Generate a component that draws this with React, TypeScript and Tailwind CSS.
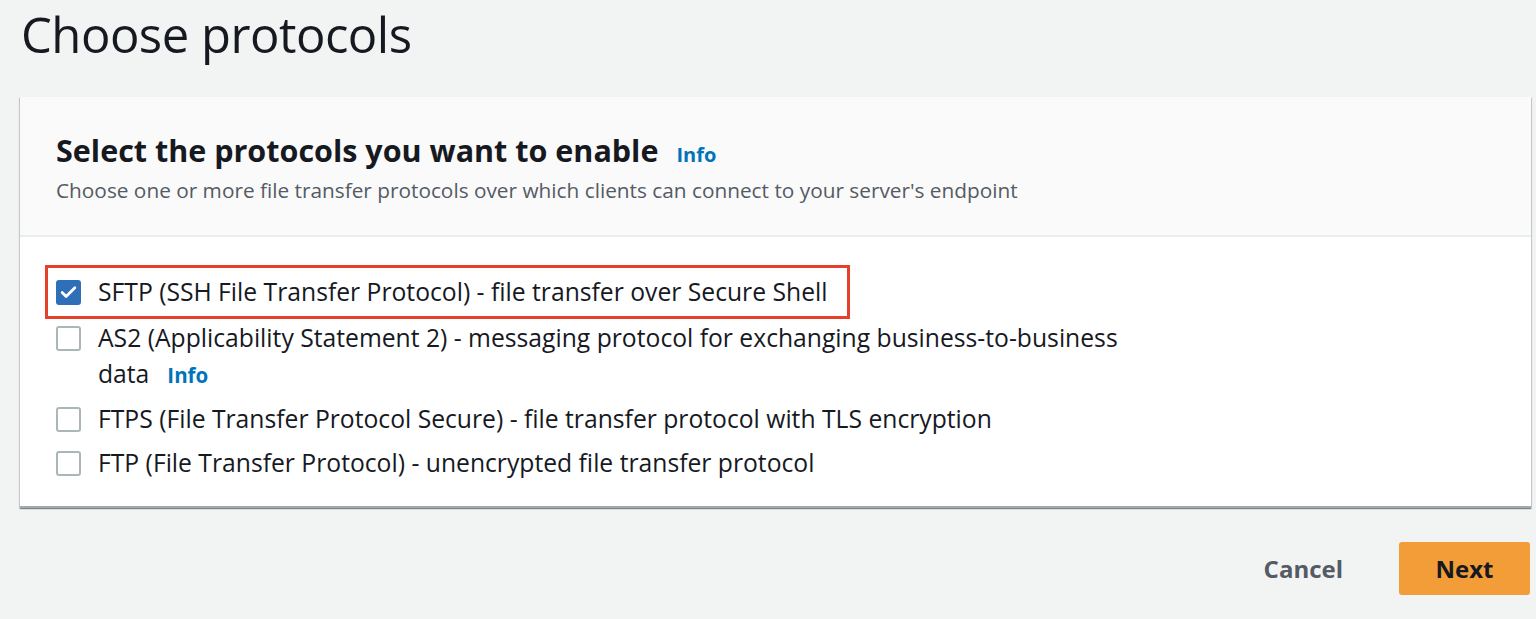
import { Check } from 'lucide-react';

const protocols = [
  { id: 'sftp', label: 'SFTP (SSH File Transfer Protocol) - file transfer over Secure Shell', checked: true },
  { id: 'as2', label: 'AS2 (Applicability Statement 2) - messaging protocol for exchanging business-to-business', tail: 'data', info: true },
  { id: 'ftps', label: 'FTPS (File Transfer Protocol Secure) - file transfer protocol with TLS encryption' },
  { id: 'ftp', label: 'FTP (File Transfer Protocol) - unencrypted file transfer protocol' },
];

function Box({ checked }: { checked?: boolean }) {
  return checked ? (
    <div className="w-[25px] h-[25px] shrink-0 rounded-[3px] bg-[#2f6fb8] flex items-center justify-center">
      <Check className="text-white" size={19} strokeWidth={3.5} />
    </div>
  ) : (
    <div className="w-[25px] h-[25px] shrink-0 rounded-[3px] border-2 border-[#aab7b8] bg-white" />
  );
}

export default function App() {
  return (
    <main className="min-h-screen bg-[#f2f3f3] text-[#16191f] font-['Open_Sans',sans-serif]">
      <h1 className="pl-[21px] pt-[3px] text-[49px] leading-[62px] tracking-[-0.5px]">Choose protocols</h1>

      <section className="mt-[32px] ml-[20px] mr-[5px] bg-white shadow-[0_1px_1px_0_rgba(0,28,36,0.3),1px_1px_1px_0_rgba(0,28,36,0.15),-1px_1px_1px_0_rgba(0,28,36,0.15)] border-b-2 border-[#a3acad]">
        <div className="bg-[#fafafa] border-b-2 border-[#eaeded] px-[36px] pt-[33px] pb-[28px]">
          <div className="flex items-baseline gap-[18px]">
            <h2 className="text-[30.5px] leading-[40px] font-bold">Select the protocols you want to enable</h2>
            <a className="text-[20px] font-bold text-[#0073bb]">Info</a>
          </div>
          <p className="mt-[3px] text-[20.8px] leading-[34px] text-[#545b64]">
            Choose one or more file transfer protocols over which clients can connect to your server's endpoint
          </p>
        </div>

        <div className="px-[36px] pt-[37px] pb-[25px] flex flex-col gap-[8px]">
          {protocols.map((p) => (
            <div
              key={p.id}
              className={
                p.checked
                  ? 'flex gap-[17px] -mx-[11px] -mt-[9px] -mb-[7px] pl-[8px] pr-[19px] py-[6px] border-[3px] border-[#e5402a] w-fit items-center'
                  : 'flex gap-[17px] items-start'
              }
            >
              <div className={p.checked ? '' : 'pt-[6px]'}>
                <Box checked={p.checked} />
              </div>
              <div className="text-[24.7px] leading-[36px]">
                {p.label}
                {p.tail && (
                  <>
                    <br />
                    {p.tail}
                    <a className="ml-[18px] text-[20.5px] font-bold text-[#0073bb]">Info</a>
                  </>
                )}
              </div>
            </div>
          ))}
        </div>
      </section>

      <div className="flex justify-end items-center gap-[56px] pr-[6px] mt-[34px]">
        <button className="text-[24px] font-bold text-[#545b64]">Cancel</button>
        <button className="w-[131px] h-[53px] rounded-[3px] bg-[#f39d39] text-[24px] font-bold text-[#16191f]">Next</button>
      </div>
    </main>
  );
}
